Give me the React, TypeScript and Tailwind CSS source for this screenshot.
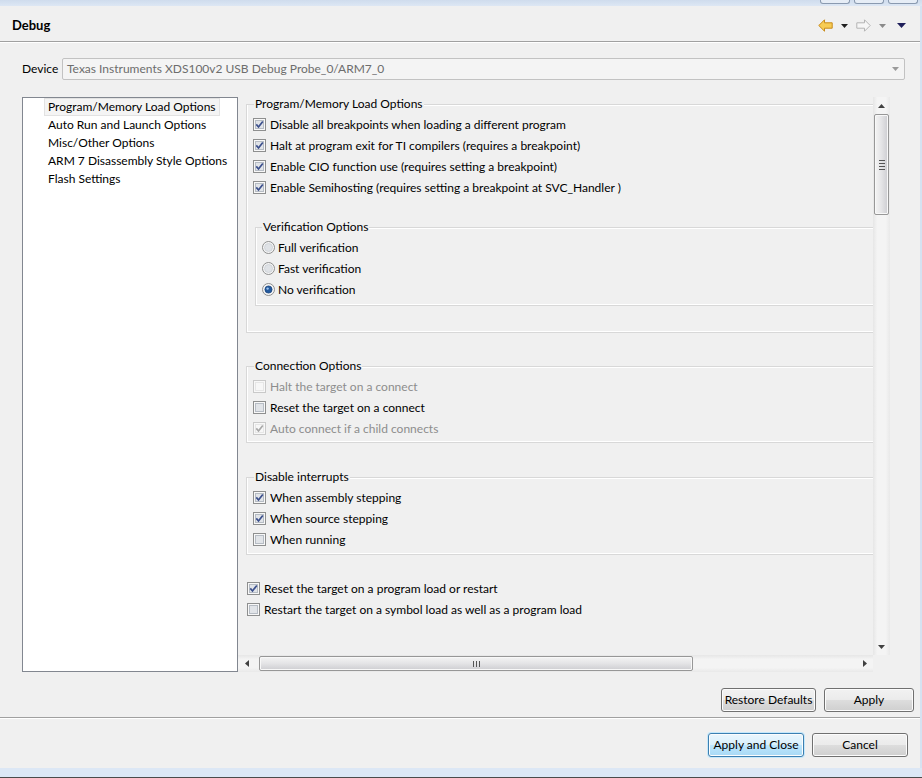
import React from 'react';

function CheckBox({ checked, disabled }: { checked?: boolean; disabled?: boolean }) {
  const border = disabled ? '#c9c9c9' : '#8e8f8f';
  const inner = disabled ? '#f7f7f7' : '#e1e4e8';
  const innerStroke = disabled ? '#e6e6e6' : '#b6bcc4';
  const tick = disabled ? '#a8a8a8' : '#3b4f8c';
  return (
    <svg width="13" height="13" viewBox="0 0 13 13" className="shrink-0">
      <rect x="0.5" y="0.5" width="12" height="12" fill="#f8f8f8" stroke={border} />
      <rect x="2.5" y="2.5" width="8" height="8" fill={inner} stroke={innerStroke} />
      {checked && <path d="M3.3 6.4 L5.5 9 L9.8 3.4" fill="none" stroke={tick} strokeWidth="1.7" />}
    </svg>
  );
}

function Radio({ checked }: { checked?: boolean }) {
  return (
    <svg width="13" height="13" viewBox="0 0 13 13" className="shrink-0">
      <circle cx="6.5" cy="6.5" r="6" fill="#f5f5f5" stroke="#8e8f8f" />
      {checked ? (
        <>
          <circle cx="6.5" cy="6.5" r="3.6" fill="#245a9e" stroke="#163f75" strokeWidth="0.7" />
          <circle cx="5.6" cy="5.6" r="1.2" fill="#9cc2ec" />
        </>
      ) : (
        <circle cx="6.5" cy="6.5" r="4" fill="#dfe2e6" stroke="#c9cdd2" strokeWidth="0.7" />
      )}
    </svg>
  );
}

function Option({ label, checked, disabled, radio }: { label: string; checked?: boolean; disabled?: boolean; radio?: boolean }) {
  return (
    <div className={`h-[21px] flex items-center ${radio ? 'gap-[3px]' : 'gap-[4px]'}`}>
      {radio ? <Radio checked={checked} /> : <CheckBox checked={checked} disabled={disabled} />}
      <span className={`whitespace-nowrap ${disabled ? 'text-[#8d8d8d]' : 'text-black'}`}>{label}</span>
    </div>
  );
}

function GroupBox({ title, indent, className, children }: { title: string; indent: string; className: string; children: React.ReactNode }) {
  return (
    <div className={`flex flex-col border-l border-b border-[#d8d8d8] shadow-[inset_1px_-1px_0_#ffffff] ${className}`}>
      <div className="-mt-[7px] -ml-px h-[14px] flex items-center">
        <div className={`h-px bg-[#d8d8d8] ${indent}`} />
        <span className="px-[1px] leading-[14px] whitespace-nowrap">{title}</span>
        <div className="flex-1 h-px bg-[#d8d8d8] shadow-[0_1px_0_#ffffff]" />
      </div>
      {children}
    </div>
  );
}

function Button({ label, width, focused }: { label: string; width: string; focused?: boolean }) {
  return (
    <div
      className={`h-[24px] ${width} rounded-[3px] border flex items-center justify-center ${
        focused
          ? 'border-[#3c7fb1] shadow-[inset_0_0_0_1px_#fcfcfc,0_0_0_1px_#c5e8fb] bg-[linear-gradient(to_bottom,#eaf6fd_0%,#d9f0fc_50%,#bee6fd_51%,#a7d9f5_100%)]'
          : 'border-[#707070] shadow-[inset_0_0_0_1px_#fcfcfc] bg-[linear-gradient(to_bottom,#f2f2f2_0%,#ebebeb_50%,#dddddd_51%,#cfcfcf_100%)]'
      }`}
    >
      {label}
    </div>
  );
}

function Triangle({ dir, color = '#404040' }: { dir: 'up' | 'down' | 'left' | 'right'; color?: string }) {
  const d = {
    up: 'M0 4 L3.5 0 L7 4 Z',
    down: 'M0 0 L7 0 L3.5 4 Z',
    left: 'M4 0 L4 7 L0 3.5 Z',
    right: 'M0 0 L4 3.5 L0 7 Z',
  }[dir];
  const horiz = dir === 'left' || dir === 'right';
  return (
    <svg width={horiz ? 4 : 7} height={horiz ? 7 : 4} viewBox={horiz ? '0 0 4 7' : '0 0 7 4'}>
      <path d={d} fill={color} />
    </svg>
  );
}

const navItems = [
  'Program/Memory Load Options',
  'Auto Run and Launch Options',
  'Misc/Other Options',
  'ARM 7 Disassembly Style Options',
  'Flash Settings',
];

export default function App() {
  return (
    <div className="w-[922px] h-[778px] flex flex-col overflow-hidden bg-[#f0f0f0] text-[12px] text-black font-['Lato',sans-serif]">
      {/* window frame top */}
      <div className="h-[6px] bg-[linear-gradient(to_bottom,#cfdced,#dde7f4)] flex justify-end gap-[4px] pr-[4px]">
        <div className="w-[30px] h-[4px] border-x border-b border-[#8a9ab0] rounded-b-[3px] bg-[#e6edf6]" />
        <div className="w-[30px] h-[4px] border-x border-b border-[#8a9ab0] rounded-b-[3px] bg-[#e6edf6]" />
        <div className="w-[30px] h-[4px] border-x border-b border-[#8a9ab0] rounded-b-[3px] bg-[#e6edf6]" />
      </div>

      <div className="h-[762px] flex">
        <div className="flex-1 flex flex-col">
          {/* header */}
          <div className="h-[35px] flex items-center justify-between pt-[4px] pl-[12px] pr-[14px]">
            <span className="font-bold text-[13px]">Debug</span>
            <div className="flex items-center">
              <svg width="15" height="13" viewBox="0 0 15 13">
                <path d="M0.8 6.5 L6.5 0.8 L6.5 3.8 L14.2 3.8 L14.2 9.2 L6.5 9.2 L6.5 12.2 Z" fill="#f7cc55" stroke="#c88a1a" strokeWidth="1" strokeLinejoin="round" />
              </svg>
              <div className="ml-[8px]"><Triangle dir="down" color="#202020" /></div>
              <svg width="15" height="13" viewBox="0 0 15 13" className="ml-[8px]">
                <path d="M14.2 6.5 L8.5 0.8 L8.5 3.8 L0.8 3.8 L0.8 9.2 L8.5 9.2 L8.5 12.2 Z" fill="#f6f6f6" stroke="#b4b4b4" strokeWidth="1" strokeLinejoin="round" />
              </svg>
              <div className="ml-[8px]"><Triangle dir="down" color="#8a8a8a" /></div>
              <svg width="9" height="5" viewBox="0 0 9 5" className="ml-[11px]">
                <path d="M0 0 L9 0 L4.5 5 Z" fill="#1f1f5a" />
              </svg>
            </div>
          </div>
          <div className="h-px bg-[#a0a0a0]" />
          <div className="h-px bg-white" />

          {/* device row */}
          <div className="mt-[15px] h-[22px] flex items-center pl-[22px] pr-[15px]">
            <span className="w-[40px]">Device</span>
            <div className="flex-1 h-full rounded-[2px] border border-[#c2c2c2] bg-[#f4f4f4] flex items-center pl-[4px] pr-[5px] text-[#6d6d6d]">
              <span className="flex-1">Texas Instruments XDS100v2 USB Debug Probe_0/ARM7_0</span>
              <Triangle dir="down" color="#9a9a9a" />
            </div>
          </div>

          {/* main area */}
          <div className="mt-[17px] h-[575px] flex pl-[22px]">
            <div className="w-[216px] h-full bg-white border border-[#828790] pl-[21px] flex flex-col items-start">
              {navItems.map((item, i) => (
                <div
                  key={item}
                  className={`h-[18px] flex items-center px-[3px] border whitespace-nowrap ${
                    i === 0 ? 'bg-[#f4f4f4] border-[#e2e2e2]' : 'border-transparent'
                  }`}
                >
                  {item}
                </div>
              ))}
            </div>

            <div className="w-[652px] h-full flex flex-col">
              <div className="h-[558px] flex">
                {/* scrollable content */}
                <div className="w-[635px] h-full overflow-hidden">
                  <div className="w-[760px] flex flex-col">
                    <GroupBox title="Program/Memory Load Options" indent="w-[8px]" className="ml-[8px] mt-[7px] pb-[26px]">
                      <div className="mt-[3px] pl-[6px]">
                        <Option checked label="Disable all breakpoints when loading a different program" />
                        <Option checked label="Halt at program exit for TI compilers (requires a breakpoint)" />
                        <Option checked label="Enable CIO function use (requires setting a breakpoint)" />
                        <Option checked label="Enable Semihosting (requires setting a breakpoint at SVC_Handler )" />
                      </div>
                      <GroupBox title="Verification Options" indent="w-[7px]" className="ml-[8px] mt-[29px] pb-[5px]">
                        <div className="mt-[3px] pl-[6px]">
                          <Option radio label="Full verification" />
                          <Option radio label="Fast verification" />
                          <Option radio checked label="No verification" />
                        </div>
                      </GroupBox>
                    </GroupBox>

                    <GroupBox title="Connection Options" indent="w-[8px]" className="ml-[8px] mt-[33px] pb-[3px]">
                      <div className="mt-[3px] pl-[6px]">
                        <Option disabled label="Halt the target on a connect" />
                        <Option label="Reset the target on a connect" />
                        <Option disabled checked label="Auto connect if a child connects" />
                      </div>
                    </GroupBox>

                    <GroupBox title="Disable interrupts" indent="w-[8px]" className="ml-[8px] mt-[34px] pb-[4px]">
                      <div className="mt-[3px] pl-[6px]">
                        <Option checked label="When assembly stepping" />
                        <Option checked label="When source stepping" />
                        <Option label="When running" />
                      </div>
                    </GroupBox>

                    <div className="ml-[9px] mt-[23px]">
                      <Option checked label="Reset the target on a program load or restart" />
                      <Option label="Restart the target on a symbol load as well as a program load" />
                    </div>
                  </div>
                </div>

                {/* vertical scrollbar */}
                <div className="w-[17px] h-full flex flex-col bg-[linear-gradient(to_right,#e6e6e6,#f4f4f4_25%,#f4f4f4_75%,#e9e9e9)]">
                  <div className="h-[17px] flex items-center justify-center">
                    <Triangle dir="up" />
                  </div>
                  <div className="h-[101px] mx-[1px] rounded-[2px] border border-[#979797] bg-[linear-gradient(to_right,#f4f4f4,#e4e4e6_50%,#cdcdd1)] shadow-[inset_0_0_0_1px_#f8f8f8] flex flex-col items-center justify-center gap-[2px]">
                    <div className="w-[6px] h-px bg-[#555]" />
                    <div className="w-[6px] h-px bg-[#555]" />
                    <div className="w-[6px] h-px bg-[#555]" />
                    <div className="w-[6px] h-px bg-[#555]" />
                  </div>
                  <div className="flex-1" />
                  <div className="h-[17px] flex items-center justify-center">
                    <Triangle dir="down" />
                  </div>
                </div>
              </div>

              {/* horizontal scrollbar */}
              <div className="h-[17px] flex">
                <div className="w-[635px] h-full flex items-center bg-[linear-gradient(to_bottom,#e6e6e6,#f4f4f4_25%,#f4f4f4_75%,#e9e9e9)]">
                  <div className="w-[17px] h-full flex items-center justify-center">
                    <Triangle dir="left" />
                  </div>
                  <div className="ml-[4px] w-[434px] h-[15px] rounded-[2px] border border-[#979797] bg-[linear-gradient(to_bottom,#f4f4f4,#e4e4e6_50%,#cdcdd1)] shadow-[inset_0_0_0_1px_#f8f8f8] flex items-center justify-center gap-[2px]">
                    <div className="w-px h-[6px] bg-[#555]" />
                    <div className="w-px h-[6px] bg-[#555]" />
                    <div className="w-px h-[6px] bg-[#555]" />
                  </div>
                  <div className="flex-1" />
                  <div className="w-[17px] h-full flex items-center justify-center">
                    <Triangle dir="right" />
                  </div>
                </div>
                <div className="w-[17px] h-full bg-[#f0f0f0]" />
              </div>
            </div>
          </div>

          {/* restore / apply */}
          <div className="mt-[16px] flex justify-end gap-[8px] pr-[6px]">
            <Button label="Restore Defaults" width="w-[95px]" />
            <Button label="Apply" width="w-[90px]" />
          </div>

          <div className="mt-[5px] h-px bg-[#a0a0a0]" />
          <div className="h-px bg-white" />

          {/* dialog buttons */}
          <div className="mt-[14px] flex justify-end gap-[8px] pr-[12px]">
            <Button label="Apply and Close" width="w-[96px]" focused />
            <Button label="Cancel" width="w-[96px]" />
          </div>
          <div className="flex-1" />
        </div>
        <div className="w-[2px] bg-[#d6e2f1]" />
      </div>

      {/* window frame bottom */}
      <div className="h-[10px] bg-[#dce7f5] border-b border-[#4a4a4a]" />
    </div>
  );
}
